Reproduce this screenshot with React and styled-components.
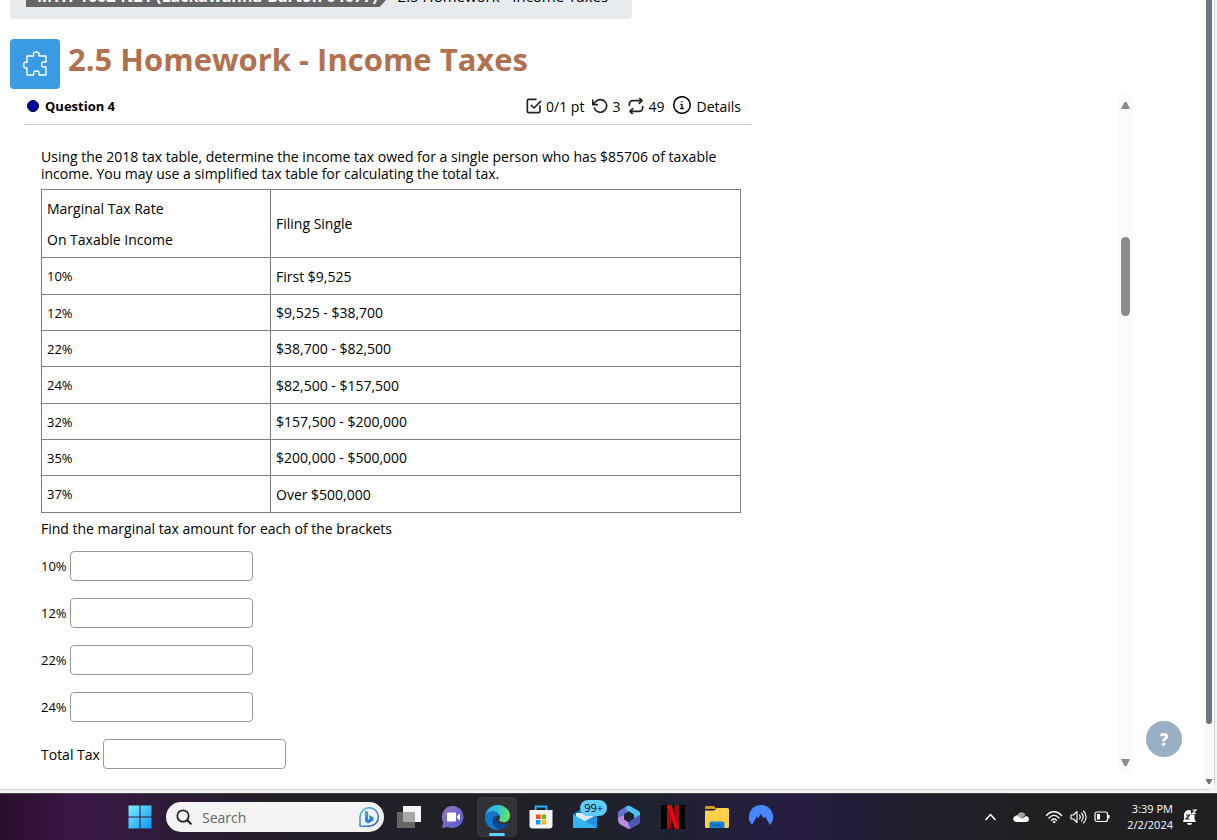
import styled, { createGlobalStyle } from "styled-components";

const GlobalStyle = createGlobalStyle`
  * {
    box-sizing: border-box;
  }

  body {
    margin: 0;
    background: #ffffff;
  }
`;

const brackets = [
  ["10%", "First $9,525"],
  ["12%", "$9,525 - $38,700"],
  ["22%", "$38,700 - $82,500"],
  ["24%", "$82,500 - $157,500"],
  ["32%", "$157,500 - $200,000"],
  ["35%", "$200,000 - $500,000"],
  ["37%", "Over $500,000"],
];

const answers = ["10%", "12%", "22%", "24%"];

function App() {
  return (
    <Screen>
      <GlobalStyle />
      <Browser>
        <Page>
          <Breadcrumb>
            <CourseLink href="#course">MTH-160Z-N21 (Lackawanna-Barton 04077)</CourseLink>
            <Crumb>2.5 Homework - Income Taxes</Crumb>
          </Breadcrumb>
          <TitleRow>
            <Tile>
              <PuzzleIcon />
            </Tile>
            <Title>2.5 Homework - Income Taxes</Title>
          </TitleRow>
          <Frame>
            <Question>
              <QuestionHead>
                <Dot />
                <QuestionName>Question 4</QuestionName>
                <Stats>
                  <Stat><CheckIcon />0/1 pt</Stat>
                  <Stat><UndoIcon />3</Stat>
                  <Stat><RepeatIcon />49</Stat>
                  <DetailsButton type="button"><InfoIcon />Details</DetailsButton>
                </Stats>
              </QuestionHead>
              <QuestionBody>
                <Text>
                  Using the 2018 tax table, determine the income tax owed for a single person who has $85706 of taxable
                  income. You may use a simplified tax table for calculating the total tax.
                </Text>
                <TaxTable>
                  <thead>
                    <tr>
                      <HeadCell scope="col">
                        Marginal Tax Rate
                        <br />
                        On Taxable Income
                      </HeadCell>
                      <HeadCell scope="col">Filing Single</HeadCell>
                    </tr>
                  </thead>
                  <tbody>
                    {brackets.map(([rate, range]) => (
                      <Row key={rate}>
                        <Cell $rate>{rate}</Cell>
                        <Cell>{range}</Cell>
                      </Row>
                    ))}
                  </tbody>
                </TaxTable>
                <Text>Find the marginal tax amount for each of the brackets</Text>
                <Answers>
                  {answers.map((name) => (
                    <Answer key={name} $rate>
                      {name}
                      <AnswerInput type="text" />
                    </Answer>
                  ))}
                  <Answer>
                    Total Tax
                    <AnswerInput type="text" />
                  </Answer>
                </Answers>
              </QuestionBody>
            </Question>
            <FrameScroll>
              <Arrow $color="#8b8b8b" $up />
              <FrameThumb />
              <Arrow $color="#8b8b8b" />
            </FrameScroll>
            <HelpColumn>
              <HelpButton type="button" aria-label="Help">?</HelpButton>
            </HelpColumn>
          </Frame>
        </Page>
        <PageScroll>
          <PageThumb />
          <Arrow $color="#6c757d" $small />
        </PageScroll>
      </Browser>
      <Taskbar>
        <Apps>
          <AppButton type="button" aria-label="Start"><StartIcon /></AppButton>
          <SearchBox>
            <SearchIcon />
            <SearchInput type="search" placeholder="Search" aria-label="Search" />
            <BingIcon />
          </SearchBox>
          <AppButton type="button" aria-label="Task view"><TaskViewIcon /></AppButton>
          <AppButton type="button" aria-label="Chat"><ChatIcon /></AppButton>
          <AppButton type="button" aria-label="Edge" $active><EdgeIcon /></AppButton>
          <AppButton type="button" aria-label="Store"><StoreIcon /></AppButton>
          <AppButton type="button" aria-label="Mail"><MailIcon /><Badge>99+</Badge></AppButton>
          <AppButton type="button" aria-label="Microsoft 365"><OfficeIcon /></AppButton>
          <AppButton type="button" aria-label="Netflix"><NetflixIcon /></AppButton>
          <AppButton type="button" aria-label="File Explorer"><FolderIcon /></AppButton>
          <AppButton type="button" aria-label="NordVPN"><NordIcon /></AppButton>
        </Apps>
        <Tray>
          <ChevronIcon />
          <CloudIcon />
          <Status>
            <WifiIcon />
            <VolumeIcon />
            <BatteryIcon />
          </Status>
          <Clock>
            <span>3:39 PM</span>
            <span>2/2/2024</span>
          </Clock>
          <BellIcon />
        </Tray>
      </Taskbar>
    </Screen>
  );
}

const Screen = styled.div`
  min-height: 100vh;
  display: flex;
  flex-direction: column;
  overflow: hidden;
  background: #f3f3f3;
  color: #000000;
  font-family: "Open Sans", "Noto Sans", sans-serif;
  font-size: 14px;
`;

const Browser = styled.div`
  flex: 1;
  display: flex;
  margin: 0 2px 3px 0;
  border: solid #d2d2d2;
  border-width: 0 1px 1px 0;
  border-radius: 0 0 8px 0;
  background: #ffffff;
`;

const Page = styled.main`
  flex: 1;
  min-width: 0;
  display: flex;
  flex-direction: column;
`;

/* scrolled part way past the top of the window */
const Breadcrumb = styled.nav`
  align-self: flex-start;
  display: flex;
  align-items: center;
  gap: 12px;
  height: 50px;
  margin: -31px 0 0 10px;
  padding: 0 24px 0 16px;
  border-radius: 4px;
  background: #e8ebee;
`;

const CourseLink = styled.a`
  height: 26px;
  padding: 0 8px 0 11px;
  background: #666666;
  clip-path: polygon(0 0, 100% 0, 100% 75%, calc(100% - 6px) 100%, 0 100%);
  color: #ffffff;
  font-size: 16px;
  font-weight: 700;
  line-height: 30px;
  text-decoration: none;
`;

const Crumb = styled.span`
  height: 26px;
  font-size: 15px;
  line-height: 30px;
`;

const TitleRow = styled.header`
  display: flex;
  gap: 8px;
  margin: 20px 0 0 10px;
`;

const Tile = styled.div`
  width: 50px;
  height: 50px;
  display: flex;
  align-items: center;
  justify-content: center;
  border-radius: 4px;
  background: #3a9be2;
`;

const Title = styled.h1`
  margin: 0;
  color: #b17150;
  font-size: 31px;
  font-weight: 700;
  line-height: 40px;
`;

const Frame = styled.div`
  flex: 1;
  display: flex;
  margin: 5px 0 16px;
`;

const Question = styled.section`
  flex: 1;
  min-width: 0;
  padding-left: 25px;
`;

const QuestionHead = styled.div`
  max-width: 726px;
  height: 31px;
  display: flex;
  align-items: center;
  padding: 0 10px 6px 2px;
  border-bottom: 1px solid #cccccc;
`;

const Dot = styled.span`
  width: 12px;
  height: 12px;
  border: 1px solid #000000;
  border-radius: 50%;
  background: #0000a8;
`;

const QuestionName = styled.h2`
  margin: 0 auto 0 6px;
  font-size: 13px;
  font-weight: 700;
`;

const Stats = styled.div`
  display: flex;
  align-items: center;
  gap: 8px;
`;

const Stat = styled.span`
  display: flex;
  align-items: center;
  gap: 4px;
`;

const DetailsButton = styled.button`
  display: flex;
  align-items: center;
  gap: 4px;
  padding: 0;
  border: 0;
  background: none;
  color: inherit;
  font: inherit;
`;

const QuestionBody = styled.div`
  max-width: 716px;
  padding: 23px 0 0 16px;
`;

const Text = styled.p`
  margin: 0;
  line-height: 17px;
`;

const TaxTable = styled.table`
  width: 100%;
  margin: 7px 0;
  border-collapse: collapse;
  table-layout: fixed;

  th:first-child {
    width: 229px;
  }
`;

const HeadCell = styled.th`
  height: 68px;
  padding: 0 5px;
  border: 1px solid #808080;
  font-weight: 400;
  line-height: 31px;
  text-align: left;
`;

const Row = styled.tr`
  height: 36px;

  &:nth-child(3n + 1) {
    height: 37px;
  }
`;

const Cell = styled.td`
  padding: 0 5px;
  border: 1px solid #808080;
  font-size: ${(props) => (props.$rate ? "13px" : "14px")};
`;

const Answers = styled.div`
  display: flex;
  flex-direction: column;
  align-items: flex-start;
  gap: 17px;
  margin-top: 14px;
`;

const Answer = styled.label`
  display: flex;
  align-items: center;
  gap: 3px;
  font-size: ${(props) => (props.$rate ? "13px" : "14px")};
`;

const AnswerInput = styled.input`
  width: 183px;
  height: 30px;
  padding: 4px 6px;
  border: 1px solid #999999;
  border-radius: 4px;
  font: inherit;
`;

const FrameScroll = styled.div`
  width: 15px;
  display: flex;
  flex-direction: column;
  align-items: center;
  justify-content: space-between;
  padding: 8px 0 7px;
  background: #fbfbfb;
`;

const FrameThumb = styled.div`
  width: 9px;
  height: 79px;
  margin: 128px 0 auto;
  border-radius: 5px;
  background: #8b8b8b;
`;

const Arrow = styled.span`
  width: ${(props) => (props.$small ? "7px" : "9px")};
  height: ${(props) => (props.$small ? "5px" : "7px")};
  background: ${(props) => props.$color};
  clip-path: ${(props) =>
    props.$up ? "polygon(0 100%, 38% 0, 62% 0, 100% 100%)" : "polygon(0 0, 100% 0, 62% 100%, 38% 100%)"};
`;

const HelpColumn = styled.div`
  width: 71px;
  display: flex;
  align-items: flex-end;
  padding: 0 0 16px 13px;
`;

const HelpButton = styled.button`
  width: 36px;
  height: 36px;
  padding: 0;
  border: 0;
  border-radius: 50%;
  background: #9aafc3;
  color: #ffffff;
  font: 800 17px "Open Sans", sans-serif;
`;

const PageScroll = styled.div`
  width: 10px;
  display: flex;
  flex-direction: column;
  align-items: center;
  padding-bottom: 5px;
  background: #fafafb;
`;

const PageThumb = styled.div`
  flex: 1;
  width: 6px;
  margin-bottom: 55px;
  border-radius: 0 0 3px 3px;
  background: #6c757d;
`;

const Taskbar = styled.footer`
  height: 47px;
  display: flex;
  align-items: center;
  justify-content: space-between;
  padding: 0 19px 0 120px;
  border-top: 1px solid #4a474a;
  background: linear-gradient(90deg, #2a0f2c 0, #391743 6%, #321a3c 11%, #241f29 22%, #1f2026 42%, #1f2230 54%, #261c41 65%, #20202c 76%, #202022 85%);
`;

const Apps = styled.div`
  display: flex;
  align-items: center;
  gap: 4px;
`;

const AppButton = styled.button`
  position: relative;
  width: 40px;
  height: 40px;
  display: flex;
  align-items: center;
  justify-content: center;
  padding: 0;
  border: 1px solid ${(props) => (props.$active ? "#38373d" : "transparent")};
  border-radius: 4px;
  background: ${(props) => (props.$active ? "#323137" : "none")};

  &::after {
    content: "";
    position: absolute;
    bottom: 0;
    width: 16px;
    height: 3px;
    border-radius: 2px;
    background: ${(props) => (props.$active ? "#60cdff" : "none")};
  }
`;

const Badge = styled.span`
  position: absolute;
  top: 2px;
  right: -3px;
  padding: 0 4px;
  border-radius: 8px;
  background: #60cdff;
  color: #000000;
  font: 11px/16px "Open Sans", sans-serif;
`;

const SearchBox = styled.div`
  width: 218px;
  height: 30px;
  display: flex;
  align-items: center;
  gap: 10px;
  margin: 0 1px 0 2px;
  padding: 0 4px 0 10px;
  border-radius: 15px;
  background: #f3f3f3;
`;

const SearchInput = styled.input`
  flex: 1;
  min-width: 0;
  padding: 0;
  border: 0;
  outline: 0;
  background: none;
  font: 14px "Open Sans", sans-serif;

  &::placeholder {
    color: #666666;
  }
`;

const Tray = styled.div`
  display: flex;
  align-items: center;
  gap: 16px;
`;

const Status = styled.div`
  display: flex;
  align-items: center;
  gap: 7px;
`;

const Clock = styled.time`
  display: flex;
  flex-direction: column;
  align-items: flex-end;
  margin-right: -7px;
  color: #ffffff;
  font-size: 11px;
  line-height: 16px;
`;

const Line = styled.svg`
  flex: none;
  fill: none;
  stroke: ${(props) => props.$color || "#222222"};
  stroke-width: 2;
  stroke-linecap: round;
  stroke-linejoin: round;
`;

const PuzzleIcon = () => (
  <Line width="26" height="26" viewBox="-1 0 26 26" $color="#ffffff">
    <path
      strokeWidth="1.4"
      d="M4 5h6.2c.6 0 .8-.5.5-1C9.6 2.4 11 1 13.300 1s3.700 1.400 2.700 3c-.3.500-.1 1 .5 1H23v5.500c0 .9-.8 1-1.400.5-1.600-.9-2.900.4-2.900 2.400s1.300 3.300 2.900 2.400c.6-.4 1.400-.3 1.400.5V24h-6.500c-.7 0-.7-.6-.4-1.200.8-1.500-.6-2.800-2.600-2.800s-3.600 1.300-2.700 2.800c.3.600.2 1.200-.5 1.200H4v-6.800c0-.7-.6-.7-1.100-.4C1.500 17.500.7 16.300.7 14s1.200-3.600 2.500-2.700c.4.300.8.200.8-.4z"
    />
  </Line>
);

const CheckIcon = () => (
  <Line width="16" height="16" viewBox="0 0 24 24">
    <path strokeWidth="2.5" d="M21 12v8a2 2 0 0 1-2 2H4a2 2 0 0 1-2-2V4a2 2 0 0 1 2-2h11M8 11l4 4L22 5" />
  </Line>
);

const UndoIcon = () => (
  <Line width="16" height="16" viewBox="0 0 24 24">
    <path strokeWidth="2.5" d="M1 3v7h7M3.500 15a9.500 9.500 0 1 0 2.200-9.800L1 10" />
  </Line>
);

const RepeatIcon = () => (
  <Line width="16" height="16" viewBox="0 0 24 24">
    <path strokeWidth="2.5" d="M17 0l4 4-4 4M2 11V9a5 5 0 0 1 5-5h14M7 24l-4-4 4-4M22 13v2a5 5 0 0 1-5 5H3" />
  </Line>
);

const InfoIcon = () => (
  <Line width="20" height="20" viewBox="0 0 20 20" $color="#000000">
    <circle cx="10" cy="9" r="8.300" strokeWidth="1.500" />
    <path d="M9 8.500h1v4M8.500 12.500h3M10 5.500v.2" strokeWidth="1.300" />
  </Line>
);

const StartIcon = () => (
  <svg width="24" height="24" viewBox="0 0 24 24">
    <defs>
      <linearGradient id="start" x1="0" y1="0" x2="24" y2="24" gradientUnits="userSpaceOnUse">
        <stop stopColor="#7ff0ff" />
        <stop offset="1" stopColor="#0a94f5" />
      </linearGradient>
    </defs>
    <path fill="url(#start)" d="M.5.500h11v11H.5zM12.500.5h11v11h-11zM.5 12.500h11v11H.5zM12.500 12.500h11v11h-11z" />
  </svg>
);

const SearchIcon = () => (
  <Line width="16" height="16" viewBox="0 0 16 16">
    <circle cx="7" cy="7" r="5.700" strokeWidth="1.700" />
    <path d="m11.300 11.300 3.500 3.500" />
  </Line>
);

const BingIcon = () => (
  <svg width="22" height="22" viewBox="0 0 22 22">
    <defs>
      <linearGradient id="bing" x1="3" y1="1" x2="18" y2="21" gradientUnits="userSpaceOnUse">
        <stop stopColor="#35c4ee" />
        <stop offset="1" stopColor="#2457d6" />
      </linearGradient>
    </defs>
    <path fill="none" stroke="url(#bing)" strokeWidth="1.500" d="M2 20V11a9.200 9.200 0 1 1 9.200 9.200z" />
    <path fill="url(#bing)" d="M7 4.500l3 1.200v8l1.800-.9-1.300-3.800 5 2.300v3l-5.400 3.200L7 15.500z" />
  </svg>
);

const TaskViewIcon = () => (
  <svg width="26" height="24" viewBox="0 0 26 24">
    <path fill="#f5f5f5" d="M7 1h18v16H7z" />
    <path fill="#666666" d="M1 7h18v16H1z" />
    <path fill="#a9a9a9" d="M7 7h12v10H7z" />
  </svg>
);

const ChatIcon = () => (
  <svg width="24" height="24" viewBox="0 0 24 24">
    <defs>
      <linearGradient id="chat" x1="0" y1="2" x2="24" y2="20" gradientUnits="userSpaceOnUse">
        <stop stopColor="#9a79bd" />
        <stop offset="1" stopColor="#5059d0" />
      </linearGradient>
    </defs>
    <path fill="url(#chat)" d="M12 1a11 11 0 1 1-5 21L1 23l1.300-5.500A11 11 0 0 1 12 1z" />
    <path fill="#ffffff" d="M7 7.500h7a1 1 0 0 1 1 1v7a1 1 0 0 1-1 1H7a1 1 0 0 1-1-1v-7a1 1 0 0 1 1-1zM16 11l3-2.500v7L16 13z" />
  </svg>
);

const EdgeIcon = () => (
  <svg width="25" height="25" viewBox="0 0 24 24">
    <defs>
      <linearGradient id="edgeTop" x1="1" y1="5" x2="23" y2="10" gradientUnits="userSpaceOnUse">
        <stop stopColor="#2fa7e8" />
        <stop offset=".5" stopColor="#31c4cf" />
        <stop offset="1" stopColor="#69e35c" />
      </linearGradient>
    </defs>
    <path fill="url(#edgeTop)" d="M0 11.500C.6 4.800 5.600 0 12 0c7 0 12 4.800 12 10.200 0 3.600-2.700 6.300-6.300 6.300-2.900 0-4.200-1.300-4.200-2.100 0-.6.900-1 .9-2.600C14.400 8.600 11 6.300 7.400 6.300 3.900 6.300 1.200 8.500 0 11.500z" />
    <path fill="#1276cb" d="M0 12c1.100-3.500 4-5.700 7.400-5.700 3.200 0 5.800 1.700 6.700 4-4-1-6.700 1.600-6.700 5 0 4 3.200 7.400 7.200 8.200C6.700 25.500 0 19.500 0 12z" />
    <path fill="#0c489a" d="M8 12.300c-2 5 1.600 10.200 7 11 3.200-.8 5.800-2.700 7.300-5 .3-.6-.2-.8-.6-.6-4.500 2-10.200.3-11-3.700-.3-1.400.2-2.700 1.200-3.600-1.600.1-3.200.7-3.900 1.900z" />
  </svg>
);

const StoreIcon = () => (
  <svg width="24" height="24" viewBox="0 0 24 24">
    <path fill="none" stroke="#28b2e9" strokeWidth="2" d="M6.500 6V1.500h11V6" />
    <path fill="#f4f4f4" d="M.5 5h23v15.500a3 3 0 0 1-3 3h-17a3 3 0 0 1-3-3z" />
    <path fill="#f25022" d="M7 9.500h4.500V14H7z" />
    <path fill="#7fba00" d="M12.500 9.500H17V14h-4.500z" />
    <path fill="#00a4ef" d="M7 15h4.500v4.500H7z" />
    <path fill="#ffb900" d="M12.500 15H17v4.500h-4.500z" />
  </svg>
);

const MailIcon = () => (
  <svg width="26" height="24" viewBox="0 0 26 24">
    <path fill="#1679c5" d="M1 9l12-7 12 7v14H1z" />
    <path fill="#dceaf5" d="M4 8h18v6l-9 4-9-4z" />
    <path fill="#1f91df" d="M25 9.500 1 23h23a1 1 0 0 0 1-1z" />
    <path fill="#36b4ee" d="M1 9.500 25 23H2a1 1 0 0 1-1-1z" />
  </svg>
);

const OfficeIcon = () => (
  <svg width="22" height="24" viewBox="0 0 22 24">
    <path fill="#6170c9" d="M8 1.500 1.500 5.500A2.500 2.500 0 0 0 0 8v8l6-3V9.500l6-4V2z" />
    <path fill="#48c4ee" d="m8 1.500 3-1 9 5A3 3 0 0 1 22 8v8l-6-2.500v-4L8.500 5z" />
    <path fill="#b98be0" d="M0 16v-3l6-3v4.500l5 3 5-3V12l6 4-1.500 3-7.500 4.200a4 4 0 0 1-4 0L1.500 19z" />
    <path fill="#4b57b3" d="m16 13 6-3v6c0 1.500-.5 2.500-1.500 3l-8 4.500L10 18z" />
  </svg>
);

const NetflixIcon = () => (
  <svg width="24" height="24" viewBox="0 0 24 24">
    <path fill="#000000" d="M0 0h24v24H0z" />
    <path fill="#a90910" d="M6 0h4.500v23.500L6 24zM13.500 0H18v24l-4.500-.5z" />
    <path fill="#e50914" d="M6 0h4.500L18 24l-4.500-.5z" />
  </svg>
);

const FolderIcon = () => (
  <svg width="24" height="24" viewBox="0 0 24 24">
    <path fill="#d99a0b" d="M0 2.500A1.500 1.500 0 0 1 1.500 1H9l2.500 3H0z" />
    <path fill="#ffd04c" d="M0 5.500h9L12 3h10.500A1.500 1.500 0 0 1 24 4.500v17a1.500 1.500 0 0 1-1.500 1.500h-21A1.500 1.500 0 0 1 0 21.500z" />
    <path fill="#1780d4" d="M4.500 23v-4.500a2 2 0 0 1 2-2h11a2 2 0 0 1 2 2V23z" />
    <path fill="#0a5ea8" d="M8 19.500h8V21H8z" />
  </svg>
);

const NordIcon = () => (
  <svg width="24" height="24" viewBox="0 0 24 24">
    <path fill="#4687ff" d="M3 20A12 12 0 0 1 12 0a12 12 0 0 1 9 20l-5-8.500-1.500 2L12 8.500l-2.700 5-1.500-2z" />
  </svg>
);

const ChevronIcon = () => (
  <Line width="13" height="12" viewBox="0 0 12 12" $color="#ffffff">
    <path strokeWidth="1.500" d="m1.500 8.500 4.500-5 4.500 5" />
  </Line>
);

const CloudIcon = () => (
  <svg width="16" height="12" viewBox="0 0 16 12">
    <path fill="#a5a5a5" d="M1 6.500C2 4.500 3.500 4 4.500 4 6 .500 11 .3 12.500 4L9 7z" />
    <path fill="#ffffff" d="M3.500 11A3 3 0 0 1 1 6c1.500-1.500 3.500-1 5 0l3 1.500L13 5c4 .500 4 6 0 6z" />
  </svg>
);

const WifiIcon = () => (
  <Line width="18" height="14" viewBox="0 0 18 14" $color="#ffffff">
    <path strokeWidth="1.300" d="M1.500 5.500c4-5 11-5 15 0M4 8c3-3.500 7-3.500 10 0M6.500 10.200c1.500-1.600 3.500-1.600 5 0" />
    <circle cx="9" cy="12" r=".8" fill="#ffffff" strokeWidth="1" />
  </Line>
);

const VolumeIcon = () => (
  <Line width="17" height="14" viewBox="0 0 17 14" $color="#ffffff">
    <path strokeWidth="1.100" d="M1 5v4h2.500L7 12.500v-11L3.500 5zM9.500 5c1 1.200 1 2.800 0 4M11.500 3c2.200 2.200 2.200 5.800 0 8M13.500 1c3.500 3.500 3.500 8.500 0 12" />
  </Line>
);

const BatteryIcon = () => (
  <Line width="17" height="12" viewBox="0 0 17 12" $color="#ffffff">
    <rect x="1" y="1" width="12.500" height="9.500" rx="2" strokeWidth="1.200" />
    <path fill="#ffffff" stroke="none" d="M3 3h3v5.500H3zM14 4h1.500v3.500H14z" />
  </Line>
);

const BellIcon = () => (
  <svg width="16" height="17" viewBox="0 0 16 17">
    <path fill="#ffffff" d="M2 6a5 5 0 0 1 7-4.600V5.500h3.500V10l1.500 3H1l1-3zM5 14h5a2.500 2 0 0 1-5 0z" />
    <path fill="none" stroke="#202022" strokeWidth="1.200" d="M4 6h3.500L4 10h3.500" />
    <path fill="none" stroke="#ffffff" strokeWidth="1.200" d="M10.500 1H14l-3.500 3.500H14" />
  </svg>
);

export default App;
